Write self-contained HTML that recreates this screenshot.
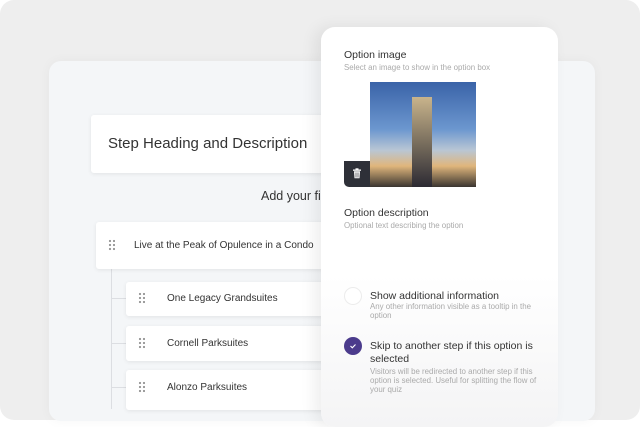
<!DOCTYPE html>
<html><head><style>
*{margin:0;padding:0;box-sizing:border-box}
body{width:640px;height:405px;background:#fff;font-family:"Liberation Sans",sans-serif;overflow:hidden;position:relative}
.outer{position:absolute;left:0;top:0;width:640px;height:420px;background:#eeeeee;border-radius:14px}
.back{position:absolute;left:49px;top:61px;width:546px;height:360px;background:#f4f6f8;border-radius:12px;box-shadow:0 0 12px rgba(0,0,0,.04)}
.box{position:absolute;background:#fff;border-radius:3px;box-shadow:0 1px 4px rgba(0,0,0,.08)}
.t{position:absolute;color:#333;white-space:nowrap}
.dots{position:absolute;width:7px;height:12px;background-image:radial-gradient(circle,#999 1px,transparent 1.3px);background-size:4px 4px}
.card{position:absolute;left:321px;top:27px;width:237px;height:400px;border-radius:14px;background:linear-gradient(#fff 0,#fff 62%,#f4f4f5 100%);box-shadow:-6px 0 16px rgba(0,0,0,.07)}
.h{position:absolute;font-size:10.5px;color:#333;white-space:nowrap}
.s{position:absolute;font-size:7.9px;color:#aaa;line-height:9px}
</style></head><body>
<div class="outer"></div>
<div class="back"></div>
<div class="box" style="left:91px;top:115px;width:245px;height:58px"></div>
<div class="t" style="left:108px;top:135px;font-size:15px">Step Heading and Description</div>
<div class="t" style="left:261px;top:189px;font-size:12.5px">Add your fi</div>
<div style="position:absolute;left:111px;top:269px;width:1px;height:140px;background:#dcdee2"></div>
<div style="position:absolute;left:111px;top:298px;width:15px;height:1px;background:#dcdee2"></div>
<div style="position:absolute;left:111px;top:343px;width:15px;height:1px;background:#dcdee2"></div>
<div style="position:absolute;left:111px;top:387px;width:15px;height:1px;background:#dcdee2"></div>
<div class="box" style="left:96px;top:222px;width:240px;height:47px"></div>
<div class="dots" style="left:108px;top:239px"></div>
<div class="t" style="left:134px;top:240px;font-size:10px">Live at the Peak of Opulence in a Condo</div>
<div class="box" style="left:126px;top:282px;width:210px;height:34px"></div>
<div class="dots" style="left:138px;top:292px"></div>
<div class="t" style="left:167px;top:293px;font-size:10px">One Legacy Grandsuites</div>
<div class="box" style="left:126px;top:326px;width:210px;height:35px"></div>
<div class="dots" style="left:138px;top:337px"></div>
<div class="t" style="left:167px;top:338px;font-size:10px">Cornell Parksuites</div>
<div class="box" style="left:126px;top:370px;width:210px;height:40px"></div>
<div class="dots" style="left:138px;top:381px"></div>
<div class="t" style="left:167px;top:382px;font-size:10px">Alonzo Parksuites</div>

<div class="card"></div>
<div class="h" style="left:344px;top:49px">Option image</div>
<div class="s" style="left:344px;top:63px">Select an image to show in the option box</div>
<div style="position:absolute;left:370px;top:82px;width:106px;height:105px;background:linear-gradient(180deg,#3a63a8 0%,#6c97cf 45%,#b9c6d4 65%,#e0b67c 80%,#3a3530 100%)">
<div style="position:absolute;left:42px;top:15px;width:20px;height:90px;background:linear-gradient(#c9b48c,#6b6256 60%,#2c2a33)"></div>
</div>
<div style="position:absolute;left:344px;top:161px;width:26px;height:26px;background:#2e3038;border-radius:0 0 0 5px"></div>
<svg style="position:absolute;left:352px;top:168px" width="10" height="11" viewBox="0 0 10 11"><rect x="1" y="1.5" width="8" height="1.3" fill="#fff"/><rect x="3.5" y="0.3" width="3" height="1.5" fill="#fff"/><path d="M2 3.3h6l-.5 7h-5z" fill="#fff"/><path d="M4 4.5v5M6 4.5v5" stroke="#2e3038" stroke-width=".7"/></svg>
<div class="h" style="left:344px;top:207px">Option description</div>
<div class="s" style="left:344px;top:221px">Optional text describing the option</div>
<div style="position:absolute;left:344px;top:287px;width:18px;height:18px;border-radius:50%;border:1px solid #ececec;background:#fff"></div>
<div class="h" style="left:370px;top:290px">Show additional information</div>
<div class="s" style="left:370px;top:302px;width:176px">Any other information visible as a tooltip in the option</div>
<div style="position:absolute;left:344px;top:337px;width:18px;height:18px;border-radius:50%;background:#4b3b8c"></div>
<svg style="position:absolute;left:349px;top:342px" width="8" height="8" viewBox="0 0 8 8"><path d="M1.5 4l1.8 1.8L6.5 2.5" stroke="#fff" stroke-width="1.1" fill="none"/></svg>
<div class="h" style="left:370px;top:340px;line-height:13px;width:180px;white-space:normal">Skip to another step if this option is selected</div>
<div class="s" style="left:370px;top:367px;width:178px">Visitors will be redirected to another step if this option is selected. Useful for splitting the flow of your quiz</div>
</body></html>
